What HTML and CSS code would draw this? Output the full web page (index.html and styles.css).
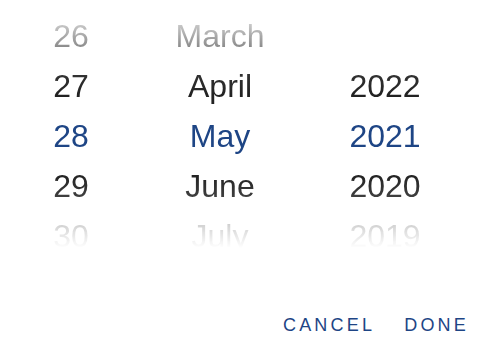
FILE: index.html
```html
<!DOCTYPE html>
<html>
<head>
<meta charset="utf-8">
<link rel="stylesheet" href="styles.css">
</head>
<body>
<div class="dialog">
  <div class="picker">
    <div class="col">
      <div class="item">26</div>
      <div class="item">27</div>
      <div class="item selected">28</div>
      <div class="item">29</div>
      <div class="item">30</div>
    </div>
    <div class="col">
      <div class="item">March</div>
      <div class="item">April</div>
      <div class="item selected">May</div>
      <div class="item">June</div>
      <div class="item">July</div>
    </div>
    <div class="col">
      <div class="item"></div>
      <div class="item">2022</div>
      <div class="item selected">2021</div>
      <div class="item">2020</div>
      <div class="item">2019</div>
    </div>
  </div>
  <div class="actions">
    <button class="btn">CANCEL</button>
    <button class="btn">DONE</button>
  </div>
</div>
</body>
</html>
```
FILE: styles.css
```css
html, body {
  margin: 0;
  padding: 0;
  background: #ffffff;
}
.dialog {
  width: 483px;
  height: 351px;
  font-family: "Liberation Sans", Arial, sans-serif;
}
.picker {
  display: grid;
  grid-template-columns: 142px 156px 174px;
  padding-top: 11px;
  height: 249px;
  -webkit-mask-image: linear-gradient(to bottom,
    rgba(0,0,0,0) 4px,
    rgba(0,0,0,0.23) 23px,
    rgba(0,0,0,0.52) 47px,
    rgba(0,0,0,0.92) 73px,
    rgba(0,0,0,1) 95px,
    rgba(0,0,0,1) 175px,
    rgba(0,0,0,0.85) 200px,
    rgba(0,0,0,0.2) 225px,
    rgba(0,0,0,0) 248px);
  mask-image: linear-gradient(to bottom,
    rgba(0,0,0,0) 4px,
    rgba(0,0,0,0.23) 23px,
    rgba(0,0,0,0.52) 47px,
    rgba(0,0,0,0.92) 73px,
    rgba(0,0,0,1) 95px,
    rgba(0,0,0,1) 175px,
    rgba(0,0,0,0.85) 200px,
    rgba(0,0,0,0.2) 225px,
    rgba(0,0,0,0) 248px);
}
.col {
  display: flex;
  flex-direction: column;
  align-items: center;
}
.item {
  height: 50px;
  line-height: 50px;
  font-size: 32px;
  color: #222222;
}
.item.selected {
  color: #1e4585;
}
.actions {
  display: flex;
  justify-content: flex-end;
  gap: 29px;
  padding-right: 14px;
  padding-top: 54px;
}
.btn {
  background: none;
  border: none;
  padding: 0;
  margin: 0;
  font-family: "Liberation Sans", Arial, sans-serif;
  font-size: 18px;
  letter-spacing: 3.2px;
  color: #1e4585;
  line-height: 22px;
}
```
